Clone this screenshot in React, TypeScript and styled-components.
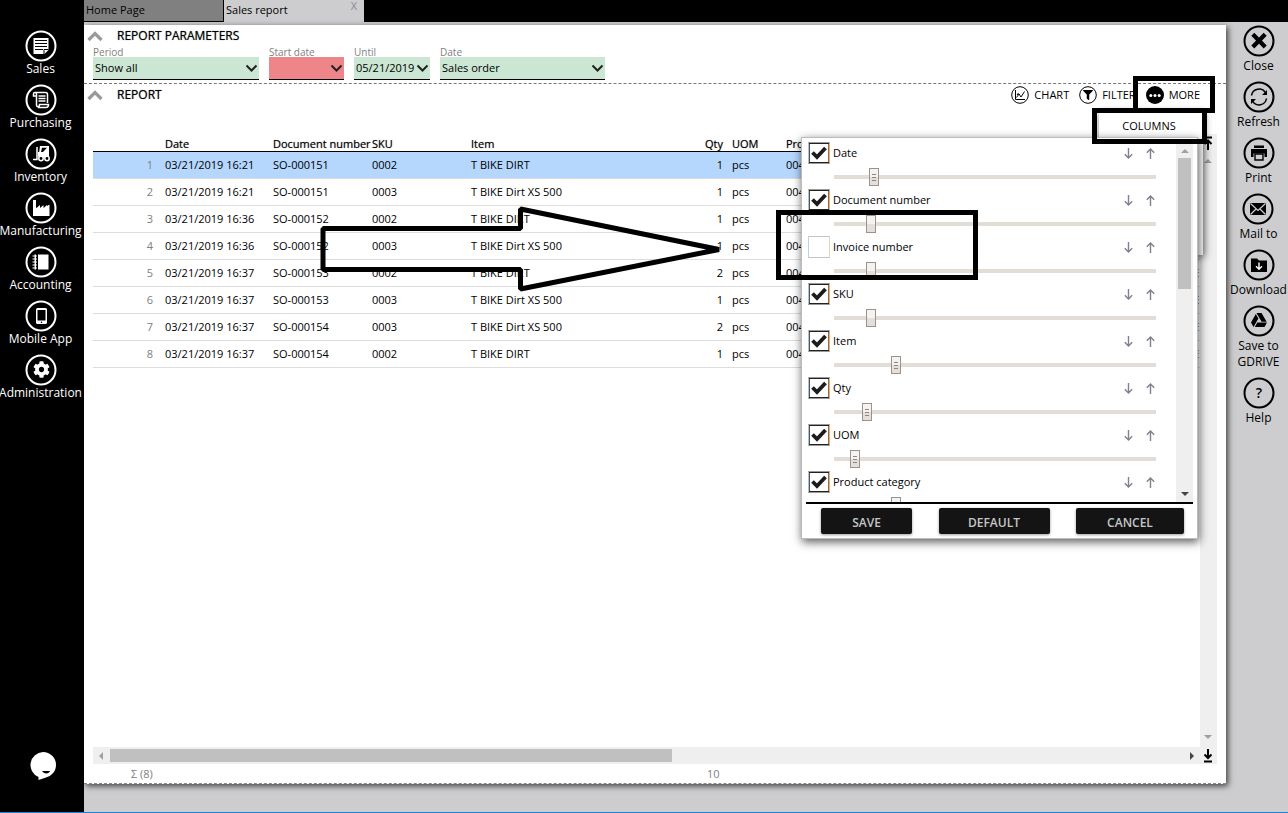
import React from "react";
import styled, { createGlobalStyle } from "styled-components";
import { FaCog, FaGoogleDrive, FaFilter } from "react-icons/fa";

const GlobalStyle = createGlobalStyle`
  *, *::before, *::after { box-sizing: border-box; }
  body {
    margin: 0;
    background: #cdcdcf;
    color: #000;
    font-family: "Open Sans", "Noto Sans", sans-serif;
    font-size: 11px;
    line-height: 16px;
  }
  button, select, input { font: inherit; color: inherit; margin: 0; }
  button { border: 0; padding: 0; background: none; cursor: pointer; }
`;

const Page = styled.div`
  display: grid;
  grid-template-columns: 84px minmax(0, 1fr);
  min-height: 100vh;
  border-bottom: 1px solid #1a82d8;
`;

/* ---------- left navigation ---------- */

const Sidebar = styled.nav`
  display: flex;
  flex-direction: column;
  padding-top: 30px;
  padding-bottom: 31px;
  background: #000;
  color: #fff;
`;

const NavItem = styled.a`
  display: flex;
  flex-direction: column;
  align-items: center;
  height: 54px;
  margin-right: 3px;
  color: #fff;
  font-size: 12px;
  line-height: 14px;
  text-decoration: none;
  white-space: nowrap;
`;

const ChatButton = styled.button`
  margin: auto 0 0 29px;
  width: 28px;
  height: 30px;
`;

const RoundIcon = styled.svg`
  display: block;
  flex: none;
  width: 32px;
  height: 32px;
`;

const Circle = () => (
  <circle cx="16" cy="16" r="14.5" fill="none" stroke="currentColor" strokeWidth="2" />
);

/* ---------- frame ---------- */

const Workspace = styled.div`
  display: flex;
  flex-direction: column;
  min-width: 0;
`;

const TabBar = styled.div`
  display: flex;
  height: 22px;
  background: #000;
`;

const Tab = styled.div<{ $active?: boolean }>`
  display: flex;
  align-items: flex-start;
  justify-content: space-between;
  width: 140px;
  padding: 2px 7px 0 2px;
  background: ${(p) => (p.$active ? "#cdcdcf" : "#808080")};
  border: solid #000;
  border-width: ${(p) => (p.$active ? "0" : "0 1px 1px 0")};
`;

const TabLabel = styled.button`
  font-size: 11px;
  line-height: 16px;
`;

const TabClose = styled.button`
  color: #8c8c8c;
  font-size: 11px;
  line-height: 8px;
`;

const Body = styled.div`
  display: flex;
  flex: 1;
  padding-top: 3px;
  padding-bottom: 28px;
`;

const Panel = styled.main`
  position: relative;
  display: flex;
  flex: 1;
  flex-direction: column;
  min-width: 0;
  background: #fff;
  border-bottom: 1px dashed #888;
  box-shadow: 2px 2px 6px rgba(0, 0, 0, 0.7);
`;

const ActionBar = styled.aside`
  display: flex;
  flex-direction: column;
  align-items: center;
  width: 62px;
  padding-left: 3px;
`;

const Action = styled.button`
  display: flex;
  flex-direction: column;
  align-items: center;
  gap: 1px;
  margin-bottom: 7px;
  font-size: 12px;
  line-height: 16px;
`;

/* ---------- sections ---------- */

const SectionHead = styled.div`
  display: flex;
  align-items: center;
  height: 22px;
  padding: 0 26px 0 3px;
`;

const Collapse = styled.button`
  width: 16px;
  height: 12px;
  margin-right: 14px;
  svg { display: block; }
`;

const SectionTitle = styled.h2`
  margin: 0;
  font-size: 12px;
  font-weight: 500;
  line-height: 16px;
  text-shadow: 0 0 1px rgba(0, 0, 0, 0.6);
`;

const Parameters = styled.section`
  padding-bottom: 3px;
  border-bottom: 1px dashed #777;
`;

const Fields = styled.div`
  display: flex;
  gap: 10px;
  padding-left: 9px;
`;

const Field = styled.label<{ $width: number }>`
  position: relative;
  display: block;
  width: ${(p) => p.$width}px;
  color: #808080;
  font-size: 10px;
  line-height: 10px;
`;

const Select = styled.select<{ $missing?: boolean }>`
  appearance: none;
  display: block;
  width: 100%;
  height: 23px;
  padding: 0 0 0 2px;
  border: 0;
  border-bottom: 1px solid #000;
  border-radius: 0;
  background: ${(p) => (p.$missing ? "#ee8689" : "#cbe7d3")};
  color: #000;
  font-size: 11px;
`;

const SelectArrow = styled.svg`
  position: absolute;
  right: 1px;
  bottom: 7px;
  pointer-events: none;
`;

const Tools = styled.div`
  display: flex;
  gap: 10px;
  margin-left: auto;
`;

const Tool = styled.button`
  display: flex;
  align-items: center;
  gap: 5px;
  svg { display: block; }
`;

/* ---------- data grid ---------- */

const Report = styled.section`
  display: flex;
  flex: 1;
  flex-direction: column;
`;

const GridFrame = styled.div`
  display: grid;
  grid-template-columns: minmax(0, 1fr) 17px;
  grid-template-rows: minmax(0, 1fr) 17px;
  flex: 1;
  margin: 28px 9px 0;
`;

const Table = styled.table`
  width: 100%;
  align-self: start;
  table-layout: fixed;
  border-collapse: separate;
  border-spacing: 0;
`;

const HeadCell = styled.th<{ $right?: boolean }>`
  height: 18px;
  padding: 3px 3px 0 6px;
  border-bottom: 1px solid #000;
  font-weight: 500;
  line-height: 14px;
  text-align: ${(p) => (p.$right ? "right" : "left")};
  text-shadow: 0 0 1px rgba(0, 0, 0, 0.5);
  white-space: nowrap;
`;

const Row = styled.tr<{ $selected?: boolean }>`
  background: ${(p) => (p.$selected ? "#b5d7fe" : "transparent")};
`;

const Cell = styled.td<{ $right?: boolean }>`
  height: 27px;
  padding: 0 3px 0 6px;
  border-bottom: 1px solid #ddd;
  overflow: hidden;
  text-align: ${(p) => (p.$right ? "right" : "left")};
  white-space: nowrap;
`;

const NumberCell = styled(Cell)`
  padding-right: 6px;
  color: #808080;
  text-align: right;
`;

const VerticalBar = styled.div`
  display: flex;
  flex-direction: column;
  align-items: center;
  justify-content: space-between;
  padding-right: 1px;
  background: #efefef;
`;

const BarEnd = styled.div`
  display: flex;
  flex-direction: column;
  align-items: center;
  gap: 9px;
  padding: 2px 0 8px;
  svg { display: block; }
`;

const HorizontalBar = styled.div`
  display: flex;
  align-items: center;
  padding: 0 6px;
  background: #efefef;
`;

const HorizontalThumb = styled.div`
  flex: 0 0 562px;
  height: 13px;
  margin: 0 auto 0 7px;
  background: #c0c0c0;
`;

const BarCorner = styled.div`
  display: flex;
  align-items: center;
  justify-content: center;
  padding-right: 1px;
  background: #efefef;
`;

const Totals = styled.div`
  display: grid;
  grid-template-columns: 576px 20px;
  height: 19px;
  padding-left: 47px;
  color: #808080;
  line-height: 19px;
`;

/* ---------- menu and column chooser ---------- */

const ColumnsMenu = styled.div`
  position: absolute;
  top: 86px;
  right: 23px;
  width: 104px;
  height: 144px;
  padding: 7px 4px 0 0;
  background: #fff;
  box-shadow: 1px 2px 8px rgba(0, 0, 0, 0.6);
  text-align: center;
`;

const Chooser = styled.form`
  position: absolute;
  top: 112px;
  right: 28px;
  width: 397px;
  padding: 4px;
  background: #fff;
  border: 1px solid #bbb;
  box-shadow: 1px 3px 9px rgba(0, 0, 0, 0.65);
`;

const ChooserBody = styled.div`
  display: flex;
  height: 362px;
  border-bottom: 2px solid #000;
`;

const ColumnList = styled.ul`
  flex: 1;
  margin: 0;
  padding: 0;
  overflow: hidden;
  list-style: none;
`;

const ColumnItem = styled.li`
  height: 47px;
  padding: 0 20px 0 2px;
`;

const ColumnTop = styled.div`
  display: flex;
  align-items: center;
  height: 22px;
`;

const ColumnLabel = styled.label`
  position: relative;
  display: flex;
  flex: 1;
  align-items: center;
  gap: 3px;
  svg {
    position: absolute;
    left: 3px;
    top: 3px;
    pointer-events: none;
  }
`;

const Check = styled.input`
  appearance: none;
  width: 22px;
  height: 22px;
  border: 1px solid #c4c4c4;
  border-left-color: #b9d3ee;
  border-right-color: #f0d2b4;
  background: #fff;
  &:checked {
    border-color: #999 #c4b6a6 #999 #e0ba8c;
    box-shadow: inset 0 1px #222, inset 0 -1px #222, inset 1px 0 #225da8, inset -1px 0 #b0651e;
  }
`;

const Move = styled.button`
  width: 22px;
  height: 16px;
  svg { display: block; margin: 0 1px 0 auto; }
`;

const Slider = styled.input<{ $grip: boolean }>`
  appearance: none;
  display: block;
  width: calc(100% - 26px);
  height: 18px;
  margin: 4px 0 0 26px;
  background: linear-gradient(#e2ddd6, #e2ddd6) 0 7px / 100% 4px no-repeat;
  &::-webkit-slider-thumb {
    appearance: none;
    width: 10px;
    height: 18px;
    border: 1px solid #9b9289;
    background: ${(p) =>
      p.$grip
        ? `linear-gradient(#8f867d, #8f867d) 2px 5px / 4px 1px no-repeat,
           linear-gradient(#8f867d, #8f867d) 2px 8px / 4px 1px no-repeat,
           linear-gradient(#8f867d, #8f867d) 2px 11px / 4px 1px no-repeat,`
        : ""}
      linear-gradient(#f5f3f1 50%, #e4dfda 50%);
  }
`;

const ChooserBar = styled.div`
  display: flex;
  flex-direction: column;
  align-items: center;
  width: 17px;
  padding: 7px 0 6px;
  background: #efefef;
  svg { display: block; }
`;

const ChooserThumb = styled.div`
  width: 13px;
  height: 131px;
  margin: 5px 0 auto;
  background: #c0c0c0;
`;

const Buttons = styled.div`
  display: flex;
  justify-content: space-between;
  padding: 4px 9px 0 15px;
`;

const DarkButton = styled.button<{ $width: number }>`
  width: ${(p) => p.$width}px;
  height: 26px;
  padding-top: 4px;
  border-radius: 2px;
  background: #141414;
  box-shadow: 0 1px 3px rgba(0, 0, 0, 0.4);
  color: #c6c6c6;
  font-size: 12px;
  font-weight: 600;
`;

/* ---------- highlight marks ---------- */

const Mark = styled.div<{ $top: number; $right: number; $w: number; $h: number }>`
  position: absolute;
  top: ${(p) => p.$top}px;
  right: ${(p) => p.$right}px;
  width: ${(p) => p.$w}px;
  height: ${(p) => p.$h}px;
  border: 5px solid #000;
  pointer-events: none;
`;

const BigArrow = styled.svg`
  position: absolute;
  top: 180px;
  left: 234px;
  pointer-events: none;
`;

/* ---------- drawings ---------- */

const Triangle = ({ dir, dark }: { dir: "up" | "down" | "left" | "right"; dark?: boolean }) => {
  const d = {
    up: "M0 4 4 0l4 4z",
    down: "M0 0h8L4 4z",
    left: "M4 0v8L0 4z",
    right: "M0 0v8l4-4z",
  }[dir];
  const flat = dir === "up" || dir === "down";
  return (
    <svg width={flat ? 8 : 4} height={flat ? 4 : 8}>
      <path d={d} fill={dark ? "#444" : "#a0a0a0"} />
    </svg>
  );
};

const JumpArrow = ({ down }: { down?: boolean }) => (
  <svg width="10" height="14" viewBox="0 0 10 14">
    <path
      d={down ? "M5 0v9M1.5 5.5 5 9l3.500-3.500M1 12.500h8" : "M5 14V4.500M1.500 8 5 4.500 8.500 8M1 1.500h8"}
      fill="none"
      stroke="#000"
      strokeWidth="2"
    />
  </svg>
);

const MoveArrow = ({ up }: { up?: boolean }) => (
  <svg width="9" height="11" viewBox="0 0 9 11">
    <path
      d={up ? "M4.500 11V1M.8 4.800 4.500 1l3.700 3.800" : "M4.500 0v10M.8 6.200 4.500 10l3.700-3.800"}
      fill="none"
      stroke="#7d828c"
      strokeWidth="1.400"
    />
  </svg>
);

const CollapseMark = () => (
  <Collapse aria-label="Collapse section">
    <svg width="16" height="12" viewBox="0 0 16 12">
      <path d="M1.500 10 8 3.500l6.500 6.500" fill="none" stroke="#9a9a9a" strokeWidth="3.200" />
    </svg>
  </Collapse>
);

const navItems: { label: string; icon: React.ReactNode }[] = [
  {
    label: "Sales",
    icon: (
      <>
        <path d="M8.500 8h15v12l-4 4h-11z" fill="#fff" />
        <path d="M10 10.500h12M10 13.500h12M10 16.500h12M10 19.500h8" stroke="#000" />
        <path d="M19 24v-4.500h4.500" fill="none" stroke="#000" />
      </>
    ),
  },
  {
    label: "Purchasing",
    icon: (
      <>
        <path
          d="M8.500 12h3V10c0-2-3-2-3 0zM10 8.500h10.500c1.500 0 2 1 2 2V19M11.500 11v9.500c0 3 3 3 3 0h9c0 2-1 3-2.500 3h-8"
          fill="none"
          stroke="#fff"
          strokeWidth="1.500"
        />
        <path d="M13.500 12h7M13.500 14.500h7M13.500 17h7" stroke="#fff" strokeWidth="1.300" />
      </>
    ),
  },
  {
    label: "Inventory",
    icon: (
      <>
        <path d="M8 21.500h4V9" fill="none" stroke="#fff" strokeWidth="1.500" />
        <path
          d="M15 8h9v8.500h-9.500v2h-1.500v-4.500h1.200zM17 9.800 16 14h2l4-4.200z"
          fill="#fff"
          fillRule="evenodd"
        />
        <path d="M13.500 16h10.500v3.500H13.500z" fill="#fff" />
        <circle cx="16" cy="20.500" r="2.200" fill="#000" stroke="#fff" strokeWidth="1.500" />
        <circle cx="22" cy="20.500" r="2.200" fill="#000" stroke="#fff" strokeWidth="1.500" />
      </>
    ),
  },
  {
    label: "Manufacturing",
    icon: <path d="M8 24V8h3v7.500l.5.500 3.500-3v3l3.500-3v3l3.500-3v1l2.500-1.500V24z" fill="#fff" />,
  },
  {
    label: "Accounting",
    icon: (
      <>
        <path d="M12.500 8.500h11v15h-11z" fill="#fff" />
        <path d="M9.500 8.500h1.500v15H9.500z" fill="#fff" />
        <path d="M7.500 10h5.500M7.500 13h5.500M7.500 16h5.500M7.500 19h5.500M7.500 22h5.500" stroke="#fff" strokeWidth="1.200" />
        <path d="M12.500 8v16" stroke="#000" />
      </>
    ),
  },
  {
    label: "Mobile App",
    icon: (
      <>
        <rect x="11" y="8" width="11" height="16" rx="1.500" fill="#fff" />
        <path d="M12.500 10h8v10.500h-8z" fill="#000" />
        <circle cx="16.500" cy="22.300" r=".8" fill="#000" />
      </>
    ),
  },
  { label: "Administration", icon: <FaCog x="8" y="7" size={17} color="#fff" /> },
];

const actions: { label: string; icon: React.ReactNode }[] = [
  { label: "Close", icon: <path d="M9.800 9.300 22.200 22M22.200 9.300 9.800 22" stroke="#000" strokeWidth="4.200" /> },
  {
    label: "Refresh",
    icon: (
      <>
        <path d="M8.500 14.500a7.600 7.600 0 0 1 14-2.700M23.500 17.500a7.600 7.600 0 0 1-14 2.700" fill="none" stroke="#000" strokeWidth="1.500" />
        <path d="M24 9v5h-5zM8 23v-5h5z" fill="#000" />
      </>
    ),
  },
  {
    label: "Print",
    icon: (
      <>
        <path d="M11 8.500h10v2.500H11zM8 12h16v8h-2.500v-3.500h-11V20H8z" fill="#000" />
        <path d="M12 17h8v6h-8z" fill="none" stroke="#000" strokeWidth="1.400" />
      </>
    ),
  },
  {
    label: "Mail to",
    icon: (
      <>
        <path d="M8 10h16v12H8z" fill="#000" />
        <path d="M8.500 10.500 16 17.500l7.500-7M8.500 21.500l5.500-5.500M23.500 21.500 18 16" fill="none" stroke="#cdcdcf" strokeWidth="1.200" />
      </>
    ),
  },
  {
    label: "Download",
    icon: (
      <>
        <path d="M8 9.500h6l2 2h8v11.500H8z" fill="#000" />
        <path d="M16 13.500v6.500M13 17.300l3 3 3-3" fill="none" stroke="#fff" strokeWidth="1.400" />
      </>
    ),
  },
  { label: "Save to GDRIVE", icon: <FaGoogleDrive x="8" y="7" size={16} /> },
  {
    label: "Help",
    icon: (
      <text x="16" y="21" textAnchor="middle" fontSize="14" fontWeight="600" fill="#000">
        ?
      </text>
    ),
  },
];

const headings = ["Date", "Document number", "SKU", "Item", "Qty", "UOM", "Product"];

const rows = [
  ["03/21/2019 16:21", "SO-000151", "0002", "T BIKE DIRT", "1"],
  ["03/21/2019 16:21", "SO-000151", "0003", "T BIKE Dirt XS 500", "1"],
  ["03/21/2019 16:36", "SO-000152", "0002", "T BIKE DIRT", "1"],
  ["03/21/2019 16:36", "SO-000152", "0003", "T BIKE Dirt XS 500", "1"],
  ["03/21/2019 16:37", "SO-000153", "0002", "T BIKE DIRT", "2"],
  ["03/21/2019 16:37", "SO-000153", "0003", "T BIKE Dirt XS 500", "1"],
  ["03/21/2019 16:37", "SO-000154", "0003", "T BIKE Dirt XS 500", "2"],
  ["03/21/2019 16:37", "SO-000154", "0002", "T BIKE DIRT", "1"],
];

const columns = [
  { name: "Date", on: true, width: 35, grip: true },
  { name: "Document number", on: true, width: 32, grip: false },
  { name: "Invoice number", on: false, width: 32, grip: false },
  { name: "SKU", on: true, width: 32, grip: false },
  { name: "Item", on: true, width: 57, grip: true },
  { name: "Qty", on: true, width: 28, grip: true },
  { name: "UOM", on: true, width: 16, grip: true },
  { name: "Product category", on: true, width: 57, grip: false },
];

const fields = [
  { label: "Period", value: "Show all", width: 166 },
  { label: "Start date", value: "", width: 75 },
  { label: "Until", value: "05/21/2019", width: 76 },
  { label: "Date", value: "Sales order", width: 165 },
];

export default function App() {
  return (
    <>
      <GlobalStyle />
      <Page>
        <Sidebar>
          {navItems.map((item) => (
            <NavItem href="#" key={item.label}>
              <RoundIcon viewBox="0 0 32 32">
                <Circle />
                {item.icon}
              </RoundIcon>
              {item.label}
            </NavItem>
          ))}
          <ChatButton aria-label="Open chat">
            <svg width="28" height="30" viewBox="0 0 28 30">
              <path d="M14 1a13 13 0 0 1 13 13c0 7-5 11-10 12.500L9.500 29v-3A13 13 0 0 1 14 1z" fill="#fff" />
              <path d="M13 20h8c-1 3-6 3.500-8 0z" fill="#000" />
            </svg>
          </ChatButton>
        </Sidebar>

        <Workspace>
          <TabBar>
            <Tab>
              <TabLabel>Home Page</TabLabel>
            </Tab>
            <Tab $active>
              <TabLabel>Sales report</TabLabel>
              <TabClose aria-label="Close Sales report">X</TabClose>
            </Tab>
          </TabBar>

          <Body>
            <Panel>
              <Parameters>
                <SectionHead>
                  <CollapseMark />
                  <SectionTitle>REPORT PARAMETERS</SectionTitle>
                </SectionHead>
                <Fields>
                  {fields.map((f) => (
                    <Field key={f.label} $width={f.width}>
                      {f.label}
                      <Select $missing={!f.value} defaultValue={f.value}>
                        <option value={f.value}>{f.value}</option>
                      </Select>
                      <SelectArrow width="13" height="9" viewBox="0 0 13 9">
                        <path d="M1.500 1.500l5 5 5-5" fill="none" stroke="#222" strokeWidth="2" />
                      </SelectArrow>
                    </Field>
                  ))}
                </Fields>
              </Parameters>

              <Report>
                <SectionHead>
                  <CollapseMark />
                  <SectionTitle>REPORT</SectionTitle>
                  <Tools>
                    <Tool>
                      <svg width="18" height="18" viewBox="0 0 18 18" fill="none" stroke="#000">
                        <circle cx="9" cy="9" r="8.300" />
                        <path d="M4.500 4v9.500H14M5.500 11.500 8 8l2 3 3.500-5.500M6 9l1.500-2" />
                      </svg>
                      CHART
                    </Tool>
                    <Tool>
                      <svg width="18" height="18" viewBox="0 0 18 18">
                        <circle cx="9" cy="9" r="8.300" fill="none" stroke="#000" />
                        <FaFilter x="4" y="4" size={10} />
                      </svg>
                      FILTER
                    </Tool>
                    <Tool>
                      <svg width="18" height="18" viewBox="0 0 18 18">
                        <circle cx="9" cy="9" r="9" />
                        <g fill="#fff">
                          <circle cx="4.800" cy="9.500" r="1.500" />
                          <circle cx="9" cy="9.500" r="1.500" />
                          <circle cx="13.200" cy="9.500" r="1.500" />
                        </g>
                      </svg>
                      MORE
                    </Tool>
                  </Tools>
                </SectionHead>

                <GridFrame>
                  <Table>
                    <colgroup>
                      <col width="66" />
                      <col width="108" />
                      <col width="99" />
                      <col width="99" />
                      <col width="198" />
                      <col width="63" />
                      <col width="54" />
                      <col />
                      <col width="13" />
                    </colgroup>
                    <thead>
                      <tr>
                        <HeadCell />
                        {headings.map((h) => (
                          <HeadCell key={h} scope="col" $right={h === "Qty"}>
                            {h}
                          </HeadCell>
                        ))}
                        <HeadCell />
                      </tr>
                    </thead>
                    <tbody>
                      {rows.map((r, i) => (
                        <Row key={i} $selected={i === 0}>
                          <NumberCell>{i + 1}</NumberCell>
                          {r.map((value, c) => (
                            <Cell key={c} $right={c === 4}>
                              {value}
                            </Cell>
                          ))}
                          <Cell>pcs</Cell>
                          <Cell>004</Cell>
                          <Cell>E</Cell>
                        </Row>
                      ))}
                    </tbody>
                  </Table>
                  <VerticalBar>
                    <BarEnd>
                      <JumpArrow />
                      <Triangle dir="up" />
                    </BarEnd>
                    <BarEnd>
                      <Triangle dir="down" />
                    </BarEnd>
                  </VerticalBar>
                  <HorizontalBar>
                    <Triangle dir="left" />
                    <HorizontalThumb />
                    <Triangle dir="right" dark />
                  </HorizontalBar>
                  <BarCorner>
                    <JumpArrow down />
                  </BarCorner>
                </GridFrame>

                <Totals>
                  <span>Σ (8)</span>
                  <span>10</span>
                </Totals>
              </Report>

              <ColumnsMenu>
                <button>COLUMNS</button>
              </ColumnsMenu>

              <Chooser>
                <ChooserBody>
                  <ColumnList>
                    {columns.map((c) => (
                      <ColumnItem key={c.name}>
                        <ColumnTop>
                          <ColumnLabel>
                            <Check type="checkbox" defaultChecked={c.on} />
                            {c.on && (
                              <svg width="16" height="16" viewBox="0 0 16 16">
                                <path d="M1.500 7.500 6 12l8.500-9" fill="none" stroke="#1c1c1c" strokeWidth="3.800" />
                              </svg>
                            )}
                            {c.name}
                          </ColumnLabel>
                          <Move type="button" aria-label={`Move ${c.name} down`}>
                            <MoveArrow />
                          </Move>
                          <Move type="button" aria-label={`Move ${c.name} up`}>
                            <MoveArrow up />
                          </Move>
                        </ColumnTop>
                        <Slider
                          type="range"
                          aria-label={`${c.name} width`}
                          min={0}
                          max={312}
                          defaultValue={c.width}
                          $grip={c.grip}
                        />
                      </ColumnItem>
                    ))}
                  </ColumnList>
                  <ChooserBar>
                    <Triangle dir="up" />
                    <ChooserThumb />
                    <Triangle dir="down" dark />
                  </ChooserBar>
                </ChooserBody>
                <Buttons>
                  <DarkButton type="button" $width={91}>SAVE</DarkButton>
                  <DarkButton type="button" $width={111}>DEFAULT</DarkButton>
                  <DarkButton type="button" $width={108}>CANCEL</DarkButton>
                </Buttons>
              </Chooser>

              <Mark $top={51} $right={11} $w={82} $h={37} />
              <Mark $top={83} $right={19} $w={115} $h={36} />
              <Mark $top={185} $right={248} $w={202} $h={70} />
              <BigArrow width="406" height="90" viewBox="0 0 406 90">
                <path
                  d="M5 23.500h197.500V4L401 44.500 202.500 84V64.500H5z"
                  fill="none"
                  stroke="#000"
                  strokeWidth="5"
                  strokeLinejoin="bevel"
                />
              </BigArrow>
            </Panel>

            <ActionBar>
              {actions.map((a) => (
                <Action key={a.label}>
                  <RoundIcon viewBox="0 0 32 32">
                    <Circle />
                    {a.icon}
                  </RoundIcon>
                  {a.label}
                </Action>
              ))}
            </ActionBar>
          </Body>
        </Workspace>
      </Page>
    </>
  );
}
